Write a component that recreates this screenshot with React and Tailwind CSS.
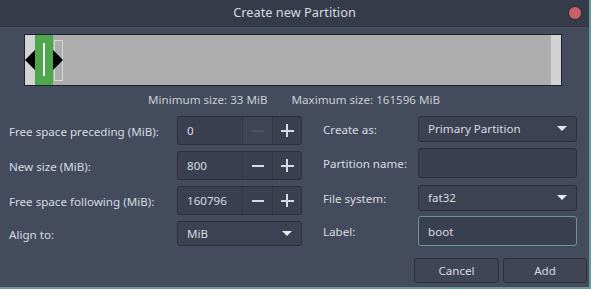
import { useState } from 'react';

function Spin({ value, minusDisabled }) {
  return (
    <div className="flex h-[29px] w-[125px] rounded-[3px] border border-[#2b303b] bg-[#3a404f] overflow-hidden">
      <div className="flex flex-1 items-center pl-[9px] text-[#d7dbe2]">{value}</div>
      <div
        className={[
          'flex w-[30px] items-center justify-center border-l border-[#333846]',
          minusDisabled ? 'bg-[#3e4453]' : '',
        ].join(' ')}
      >
        <div className={['h-[2px] w-[12px]', minusDisabled ? 'bg-[#4d5362]' : 'bg-[#d7dbe2]'].join(' ')} />
      </div>
      <div className="relative flex w-[29px] items-center justify-center border-l border-[#333846]">
        <div className="h-[2px] w-[13px] bg-[#d7dbe2]" />
        <div className="absolute h-[13px] w-[2px] bg-[#d7dbe2]" />
      </div>
    </div>
  );
}

function Combo({ value, width, height = 26 }) {
  return (
    <div
      className="flex items-center justify-between rounded-[3px] border border-[#2b303b] bg-[#3c4251] pl-[9px] pr-[9px] text-[#d7dbe2]"
      style={{ width, height }}
    >
      <span>{value}</span>
      <svg width="10" height="6" viewBox="0 0 10 6">
        <path d="M0 0 L10 0 L5 5 Z" fill="#e6e8ec" />
      </svg>
    </div>
  );
}

function Row({ label, children, height, mt = 0 }) {
  return (
    <div className="flex items-center" style={{ height, marginTop: mt }}>
      <div className="flex-1 pt-[2px] text-[#d7dbe2]">{label}</div>
      {children}
    </div>
  );
}

export default function App() {
  const [label, setLabel] = useState('boot');
  return (
    <div className="relative h-[289px] w-[591px] overflow-hidden bg-[#6f9895] text-[11.6px]" style={{ fontFamily: '"Noto Sans", "Open Sans", sans-serif' }}>
      <div className="flex h-[287px] w-[589px] flex-col bg-[#444b5c]">
        <div className="relative flex h-[27px] items-center justify-center border-b border-[#2f3441] bg-[#353b49] text-[12.8px] text-[#d5d9e0]">
          Create new Partition
          <div className="absolute right-[7px] top-[6px] h-[14px] w-[14px] rounded-full border border-[#2a2d36] bg-[#c9606b]" />
        </div>

        <div className="ml-[24px] mt-[7px] flex h-[52px] w-[538px] border border-[#1d212a] bg-[#adadad]">
          <div className="relative flex h-full">
            <div className="w-[10px] bg-[#d3d3d3]" />
            <div className="relative w-[18px] bg-[#4ca84b]">
              <div className="absolute left-[8px] top-[8px] h-[33px] w-[2px] bg-white" />
            </div>
            <div className="absolute left-[29px] top-[5px] h-[41px] w-[9px] border border-[#d8d8d8]" />
            <svg className="absolute left-0 top-[15px]" width="40" height="20" viewBox="0 0 40 20">
              <path d="M0 10 L10 0 L10 20 Z" fill="#000" />
              <path d="M28 0 L38 10 L28 20 Z" fill="#000" />
            </svg>
          </div>
          <div className="flex-1" />
          <div className="w-[10px] bg-[#d3d3d3]" />
        </div>

        <div className="mt-[5px] flex h-[17px] items-center text-[#c9ced6]">
          <span className="ml-[148px]">Minimum size: 33 MiB</span>
          <span className="ml-[24px]">Maximum size: 161596 MiB</span>
        </div>

        <div className="mt-[8px] flex">
          <div className="ml-[9px] flex w-[293px] flex-col">
            <Row label="Free space preceding (MiB):" height={29}>
              <Spin value="0" minusDisabled />
            </Row>
            <Row label="New size (MiB):" height={29} mt={6}>
              <Spin value="800" />
            </Row>
            <Row label="Free space following (MiB):" height={29} mt={6}>
              <Spin value="160796" />
            </Row>
            <Row label="Align to:" height={25} mt={6}>
              <Combo value="MiB" width={125} height={25} />
            </Row>
          </div>

          <div className="ml-[21px] flex w-[254px] flex-col">
            <Row label="Create as:" height={26}>
              <Combo value="Primary Partition" width={159} />
            </Row>
            <Row label="Partition name:" height={30} mt={6}>
              <div className="h-[30px] w-[159px] rounded-[3px] border border-[#2b303b] bg-[#3a404f]" />
            </Row>
            <Row label="File system:" height={26} mt={7}>
              <Combo value="fat32" width={159} />
            </Row>
            <Row label="Label:" height={30} mt={5}>
              <input
                value={label}
                onChange={(e) => setLabel(e.target.value)}
                className="h-[30px] w-[159px] rounded-[3px] border border-[#6a9694] bg-[#3a404f] pl-[9px] text-[#d7dbe2] outline-none"
              />
            </Row>
          </div>
        </div>

        <div className="mt-[12px] flex justify-end gap-[4px] pr-[2px]">
          <button className="h-[25px] w-[85px] rounded-[3px] border border-[#2b303b] bg-[#3f4554] text-[#d7dbe2]">Cancel</button>
          <button className="h-[25px] w-[84px] rounded-[3px] border border-[#2b303b] bg-[#3f4554] text-[#d7dbe2]">Add</button>
        </div>
      </div>
    </div>
  );
}
